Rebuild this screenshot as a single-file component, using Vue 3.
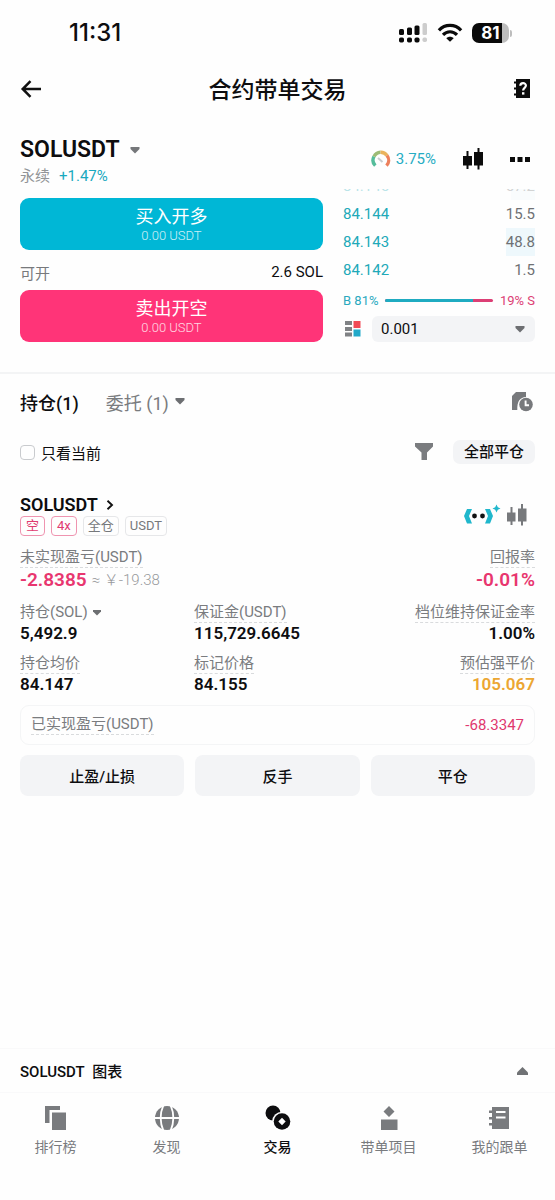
<script setup>
import { ref } from 'vue'

const onlyCurrent = ref(false)
const step = ref('0.001')

const bids = [
  { price: '84.144', size: '15.5', depth: 0 },
  { price: '84.143', size: '48.8', depth: 16 },
  { price: '84.142', size: '1.5', depth: 0 },
]

const stats = [
  { label: '持仓(SOL)', value: '5,492.9', caret: true },
  { label: '保证金(USDT)', value: '115,729.6645' },
  { label: '档位维持保证金率', value: '1.00%' },
  { label: '持仓均价', value: '84.147' },
  { label: '标记价格', value: '84.155' },
  { label: '预估强平价', value: '105.067', tone: 'warn' },
]

const actions = ['止盈/止损', '反手', '平仓']

const tabs = [
  { id: 'rank', label: '排行榜' },
  { id: 'discover', label: '发现' },
  { id: 'trade', label: '交易', active: true },
  { id: 'projects', label: '带单项目' },
  { id: 'mine', label: '我的跟单' },
]
</script>

<template>
  <div class="app">
    <div class="status">
      <span class="time">11:31</span>
      <div class="status-icons">
        <svg class="signal" width="30" height="20" viewBox="0 0 30 20">
          <g fill="#0a0a0a">
            <rect x="1" y="6" width="5" height="6" rx="1.5" />
            <rect x="9" y="4.500" width="5" height="7.500" rx="1.500" />
            <rect x="16.500" y="2.500" width="5" height="9.500" rx="1.500" />
            <rect x="1" y="14.500" width="5" height="5" rx="1.700" />
            <rect x="9" y="14.500" width="5" height="5" rx="1.700" />
            <rect x="16.500" y="14.500" width="5" height="5" rx="1.700" />
          </g>
          <rect x="24.500" y="0" width="4.500" height="12" rx="1.500" fill="#cdcdcd" />
          <rect x="24.500" y="14.500" width="4.500" height="4.500" rx="1.700" fill="#cdcdcd" />
        </svg>
        <svg width="26" height="20" viewBox="0 0 26 20" fill="none" stroke="#0a0a0a" stroke-width="3.200">
          <path d="M1.900 7.400C8 .8 18 .8 24.100 7.400" />
          <path d="M6 11.800C10 7.700 16 7.700 20 11.800" />
          <path d="M13 18.800L9.300 15.200C11.300 13.200 14.700 13.200 16.700 15.200Z" fill="#0a0a0a" stroke="none" />
        </svg>
        <div class="battery"><span>81</span><i></i></div>
      </div>
    </div>

    <header class="nav">
      <button class="icon-btn" aria-label="返回">
        <svg width="22" height="18" viewBox="0 0 22 18" fill="none" stroke="#111" stroke-width="2.500">
          <path d="M21 9H2.500M10.500 1.200L2.700 9L10.500 16.800" />
        </svg>
      </button>
      <h1>合约带单交易</h1>
      <button class="icon-btn" aria-label="帮助">
        <svg width="18" height="20" viewBox="0 0 18 20">
          <path d="M3 0H17V19H3V16.500H1V14.500H3V10.500H1V8.500H3V4.500H1V2.500H3Z" fill="#0c0c0c" />
          <path d="M7.300 6.800C7.300 3.300 12.900 3.300 12.900 6.600C12.900 8.800 10.100 8.900 10.100 11.500" fill="none" stroke="#fff" stroke-width="2.200" />
          <rect x="9" y="13.200" width="2.400" height="2.400" fill="#fff" />
        </svg>
      </button>
    </header>

    <section class="symbol">
      <div>
        <button class="pair">SOLUSDT<svg width="10" height="7" viewBox="0 0 10 7"><path d="M.5 0H9.500V2L5 6.500L.5 2Z" fill="#75777a" /></svg></button>
        <p class="sub"><span>永续</span><b>+1.47%</b></p>
      </div>
      <div class="tools">
        <svg width="20" height="18" viewBox="0 0 20 18" fill="none" stroke-width="3.400">
          <path d="M4.300 15.600A7.700 7.700 0 0 1 3 6.500" stroke="#55bd9b" />
          <path d="M3 6.500A7.700 7.700 0 0 1 9.500 2.300" stroke="#9dbb76" />
          <path d="M9.500 2.300A7.700 7.700 0 0 1 16 5.500" stroke="#eab35d" />
          <path d="M16 5.500A7.700 7.700 0 0 1 15.500 15.600" stroke="#ed805c" />
          <path d="M7 8L11.500 12" stroke="#c8cccf" stroke-width="2" />
        </svg>
        <span class="rate">3.75%</span>
        <button class="icon-btn candles" aria-label="K线">
          <svg width="20" height="22" viewBox="0 0 20 22" fill="#0c0c0c">
            <path d="M3.500 3H5.500V8H9V17.500H5.500V21H3.500V17.500H0V8H3.500ZM14.500 0H16.500V4H20V17.500H16.500V21.500H14.500V17.500H11V4H14.500Z" />
          </svg>
        </button>
        <button class="icon-btn" aria-label="更多">
          <svg width="20" height="5" viewBox="0 0 20 5" fill="#0c0c0c"><path d="M0 0H5V5H0ZM7.500 0H12.500V5H7.500ZM15 0H20V5H15Z" /></svg>
        </button>
      </div>
    </section>

    <section class="trade">
      <div class="order">
        <button class="side buy"><span>买入开多</span><small>0.00 USDT</small></button>
        <div class="avail"><span>可开</span><b>2.6 SOL</b></div>
        <button class="side sell"><span>卖出开空</span><small>0.00 USDT</small></button>
      </div>
      <div class="book">
        <div class="peek"><div class="level"><span class="price">84.145</span><span class="size" style="--depth: 24px">57.2</span></div></div>
        <div v-for="b in bids" :key="b.price" class="level">
          <span class="price">{{ b.price }}</span>
          <span class="size" :style="{ '--depth': b.depth * 2 + 'px' }">{{ b.size }}</span>
        </div>
        <div class="ratio"><span class="b">B 81%</span><div class="bar"><i></i></div><span class="s">19% S</span></div>
        <div class="precision">
          <button class="icon-btn" aria-label="盘口布局">
            <svg width="16" height="16" viewBox="0 0 16 16">
              <path d="M0 0H7V4H0ZM0 6H7V10H0ZM0 11.500H7V15.500H0Z" fill="#808285" />
              <rect x="8.500" y="0" width="7" height="7" fill="#f14b56" /><rect x="8.500" y="8.500" width="7" height="7" fill="#22a9c9" />
            </svg>
          </button>
          <label class="step">
            <select v-model="step" aria-label="价格精度"><option>0.001</option></select>
            <svg width="10" height="7" viewBox="0 0 10 7"><path d="M.5 0H9.500V2L5 6.500L.5 2Z" fill="#6d6f72" /></svg>
          </label>
        </div>
      </div>
    </section>

    <section class="holdings">
      <div class="tabs">
        <button class="tab on">持仓(1)</button>
        <button class="tab">委托 (1)<svg width="10" height="7" viewBox="0 0 10 7"><path d="M.5 0H9.500V2L5 6.500L.5 2Z" fill="#6d6f72" /></svg></button>
        <button class="icon-btn end" aria-label="历史">
          <svg width="24" height="21" viewBox="0 0 24 21">
            <path d="M5 1H15V6C9 6.500 6 10 6.300 19H1V5Z" fill="#77797c" />
            <circle cx="15" cy="13.500" r="6.800" fill="#77797c" />
            <path d="M14.600 9.500V14.200H18" fill="none" stroke="#fff" stroke-width="1.900" />
          </svg>
        </button>
      </div>
      <div class="filter">
        <label><input v-model="onlyCurrent" type="checkbox" />只看当前</label>
        <button class="icon-btn end" aria-label="筛选">
          <svg width="18" height="18" viewBox="0 0 18 18"><path d="M0 0H18V3.500L12 9.500V17H6.500V9.500L0 3.500Z" fill="#7a7c7f" /></svg>
        </button>
        <button class="close-all">全部平仓</button>
      </div>
    </section>

    <section class="position">
      <div class="pos-head">
        <div>
          <a href="#" class="name">SOLUSDT<svg width="8" height="10" viewBox="0 0 8 10"><path d="M1.500 .8L6 5L1.500 9.200" fill="none" stroke="#111" stroke-width="1.900" /></svg></a>
          <div class="tags"><span class="red">空</span><span class="red">4x</span><span>全仓</span><span>USDT</span></div>
        </div>
        <div class="pos-icons">
          <button class="icon-btn" aria-label="助手">
            <svg width="38" height="22" viewBox="0 0 38 22">
              <path d="M4 5H9L6 12L9 19.500H4L1 12Z M22 5H27L30 12L27 19.500H22L25 12Z" fill="#20b7cc" />
              <circle cx="11.500" cy="12" r="2.400" fill="#111" /><circle cx="19.500" cy="12" r="2.400" fill="#111" />
              <path d="M33.500 .5L34.800 3.200L37.500 4.500L34.800 5.800L33.500 8.500L32.200 5.800L29.500 4.500L32.200 3.200Z" fill="#20b7cc" />
            </svg>
          </button>
          <button class="icon-btn" aria-label="K线">
            <svg width="20" height="22" viewBox="0 0 20 22" fill="#77797c">
              <path d="M3.500 3H5.500V8.500H8.500V17.500H5.500V21H3.500V17.500H0V8.500H3.500ZM14 0H16V4.500H19.500V17.500H16V21.500H14V17.500H11V4.500H14Z" />
            </svg>
          </button>
        </div>
      </div>

      <div class="pnl">
        <div>
          <span class="label">未实现盈亏(USDT)</span>
          <p><b>-2.8385</b><small>≈ ￥-19.38</small></p>
        </div>
        <div class="right">
          <span class="label">回报率</span>
          <p><b>-0.01%</b></p>
        </div>
      </div>

      <dl class="stats">
        <div v-for="s in stats" :key="s.label">
          <dt><span class="label" :class="{ plain: s.caret }">{{ s.label }}</span><svg v-if="s.caret" width="8" height="6" viewBox="0 0 8 6"><path d="M0 0H8V1.500L4 5.500L0 1.500Z" fill="#6d6f72" /></svg></dt>
          <dd :class="s.tone">{{ s.value }}</dd>
        </div>
      </dl>

      <div class="realised"><span class="label">已实现盈亏(USDT)</span><b>-68.3347</b></div>
      <div class="actions"><button v-for="a in actions" :key="a">{{ a }}</button></div>
    </section>

    <footer>
      <button class="chart"><span>SOLUSDT&nbsp; 图表</span><svg width="11" height="8" viewBox="0 0 11 8"><path d="M5.500 0L11 5.500V8H0V5.500Z" fill="#707275" /></svg></button>
      <nav class="tabbar">
        <a v-for="t in tabs" :key="t.id" href="#" :class="{ active: t.active }">
          <svg width="26" height="26" viewBox="0 0 26 26" fill="currentColor">
            <path v-if="t.id === 'rank'" d="M2 1H17V5H6.500V18H2ZM9 7.500H23V25H9Z" />
            <template v-else-if="t.id === 'discover'">
              <circle cx="13" cy="13" r="12" />
              <path d="M0 13H26M9.500 0C6 8 6 18 9.500 26M16.500 0C20 8 20 18 16.500 26" fill="none" stroke="#fff" stroke-width="1.800" />
            </template>
            <template v-else-if="t.id === 'trade'">
              <circle cx="8" cy="8" r="7.500" />
              <circle cx="17" cy="16.500" r="9.800" fill="#fff" />
              <circle cx="17" cy="16.500" r="8.300" />
              <path d="M17 12.800L20.700 16.500L17 20.200L13.300 16.500Z" fill="#fff" />
            </template>
            <path v-else-if="t.id === 'projects'" d="M13 1L18.500 6.500L13 12L7.500 6.500ZM5 14.500H21.500V25H5Z" />
            <template v-else>
              <path d="M5 2H22V24H5V20.500H2V18H5V14.500H2V12H5V8H2V5.500H5Z" />
              <path d="M9 6H18.500V8H9ZM9 11.500H18.500V13.500H9Z" fill="#fff" />
            </template>
          </svg>
          <span>{{ t.label }}</span>
        </a>
      </nav>
    </footer>
  </div>
</template>

<style>
body {
  background: #fff;
}
</style>

<style scoped>
* {
  box-sizing: border-box;
  margin: 0;
}
.app {
  display: flex;
  flex-direction: column;
  min-height: 100vh;
  background: #fefefe;
  color: #0d0d0f;
  font-family: Roboto, "Noto Sans CJK SC", sans-serif;
  font-size: 15px;
}
button,
select {
  padding: 0;
  border: 0;
  background: none;
  color: inherit;
  font: inherit;
  cursor: pointer;
}
a {
  color: inherit;
  text-decoration: none;
}
svg {
  display: block;
  flex: none;
}
p {
  display: flex;
}
.icon-btn {
  display: flex;
  align-items: center;
}
.end {
  margin-left: auto;
}

.status {
  display: flex;
  align-items: center;
  justify-content: space-between;
  height: 66px;
  padding: 0 43px 0 69px;
}
.time {
  font: 500 24px/28px Inter, sans-serif;
}
.status-icons {
  display: flex;
  align-items: center;
  gap: 9px;
}
.battery {
  display: flex;
  align-items: center;
  gap: 1px;
}
.battery span {
  width: 37px;
  height: 20px;
  border-radius: 7px;
  background: linear-gradient(90deg, #0a0a0a 82%, #bdbdbd 82%);
  color: #fff;
  font: 700 17px/20px Inter, sans-serif;
  text-align: center;
}
.battery i {
  width: 2px;
  height: 7px;
  border-radius: 0 2px 2px 0;
  background: #bdbdbd;
}

.nav {
  display: flex;
  align-items: center;
  justify-content: space-between;
  height: 46px;
  padding: 0 24px 0 20px;
}
.nav h1 {
  padding-top: 3px;
  font-size: 23px;
  font-weight: 500;
  line-height: 32px;
}

.symbol {
  display: flex;
  justify-content: space-between;
  height: 76px;
  padding: 22px 25px 0 20px;
}
.pair {
  display: flex;
  align-items: center;
  gap: 10px;
  padding-top: 1px;
  font-size: 23px;
  font-weight: 600;
  line-height: 30px;
}
.sub {
  gap: 9px;
  color: #929497;
  line-height: 22px;
}
.sub b {
  color: #18a9bf;
  font-weight: 400;
}
.tools {
  display: flex;
  align-items: center;
  height: 50px;
}
.rate {
  margin: 0 27px 0 5px;
  color: #26acc3;
}
.candles {
  margin-right: 27px;
}

.trade {
  display: grid;
  grid-template-columns: 303fr 192fr;
  gap: 20px;
  padding: 0 20px 30px;
  border-bottom: 2px solid #f3f4f5;
}
.order {
  padding-top: 10px;
}
.side {
  display: flex;
  flex-direction: column;
  align-items: center;
  width: 100%;
  height: 52px;
  padding-top: 6px;
  border-radius: 9px;
  color: #fff;
  font-size: 18px;
  line-height: 25px;
}
.side small {
  font-size: 13px;
  font-weight: 300;
  line-height: 13px;
  opacity: 0.8;
}
.buy {
  background: #00b7d6;
}
.sell {
  background: #ff3478;
}
.avail {
  display: flex;
  align-items: center;
  justify-content: space-between;
  height: 40px;
  padding-top: 4px;
}
.avail span {
  color: #77797c;
}
.avail b {
  font-weight: 400;
}
.peek {
  display: flex;
  flex-direction: column;
  justify-content: flex-end;
  height: 11px;
  margin-top: 1px;
  overflow: hidden;
  opacity: 0.3;
}
.peek .level {
  flex: none;
}
.level {
  display: flex;
  align-items: center;
  justify-content: space-between;
  height: 28px;
}
.price {
  color: #21a9b8;
}
.size {
  color: #6f7174;
  line-height: 28px;
  background: linear-gradient(#eef8fc, #eef8fc) right / var(--depth) 100% no-repeat;
}
.ratio {
  display: flex;
  align-items: center;
  gap: 7px;
  height: 32px;
  font-size: 13px;
}
.b {
  color: #2aa9be;
}
.s {
  color: #dc3f75;
}
.bar {
  flex: 1;
  height: 3px;
  border-radius: 2px;
  background: #dc3f75;
  overflow: hidden;
}
.bar i {
  display: block;
  width: 81%;
  height: 100%;
  background: #1fabc1;
}
.precision {
  display: flex;
  align-items: center;
  gap: 11px;
  padding-left: 2px;
}
.step {
  display: flex;
  flex: 1;
  align-items: center;
  height: 26px;
  padding: 0 10px 0 9px;
  border-radius: 6px;
  background: #f3f4f6;
}
.step select {
  flex: 1;
  min-width: 0;
  appearance: none;
}

.holdings {
  padding: 0 20px;
}
.tabs,
.filter {
  display: flex;
  align-items: center;
}
.tabs {
  gap: 27px;
  height: 55px;
  font-size: 18px;
}
.tab {
  display: flex;
  align-items: center;
  gap: 6px;
  color: #7a7c7f;
}
.tab.on {
  color: #0d0d0f;
  font-weight: 500;
}
.filter {
  gap: 20px;
  height: 46px;
}
.filter label {
  display: flex;
  align-items: center;
  gap: 6px;
}
.filter input {
  width: 15px;
  height: 15px;
  appearance: none;
  border: 1px solid #c9cbce;
  border-radius: 4px;
}
.filter input:checked {
  background: #00b7d6;
}
.close-all {
  height: 24px;
  padding: 0 11px;
  border-radius: 7px;
  background: #f3f4f6;
  font-weight: 500;
  line-height: 24px;
}

.position {
  padding: 19px 20px 0;
}
.pos-head {
  display: flex;
  justify-content: space-between;
}
.name {
  display: flex;
  align-items: center;
  gap: 8px;
  font-size: 18px;
  font-weight: 600;
  line-height: 22px;
}
.tags {
  display: flex;
  gap: 6px;
}
.tags span {
  height: 20px;
  padding: 0 4px;
  border: 1px solid #e6e7e9;
  border-radius: 4px;
  color: #76787b;
  font-size: 13px;
  line-height: 18px;
}
.tags .red {
  padding: 0 5px;
  border-color: #ef94b0;
  color: #e03a70;
}
.pos-icons {
  display: flex;
  align-items: center;
  gap: 6px;
  padding-right: 8px;
}
.label {
  display: inline-block;
  border-bottom: 1px dashed #d9dbdd;
  color: #7a7c7f;
  line-height: 19px;
}
.plain {
  border-color: transparent;
}
.pnl {
  display: flex;
  justify-content: space-between;
  padding-top: 12px;
}
.pnl p {
  align-items: center;
  gap: 5px;
  line-height: 24px;
}
.pnl b {
  color: #e8366f;
  font-size: 19px;
  font-weight: 600;
}
.pnl small {
  color: #97999c;
  font-size: 15px;
  font-weight: 300;
}
.right {
  text-align: right;
}
.stats {
  display: grid;
  grid-template-columns: 174fr 170fr 171fr;
  row-gap: 11px;
  padding-top: 11px;
}
.stats > div:nth-child(3n) {
  text-align: right;
}
.stats dt {
  display: flex;
  align-items: center;
  gap: 5px;
}
.stats > div:nth-child(3n) dt {
  justify-content: flex-end;
}
.stats dd {
  font-size: 17px;
  font-weight: 600;
  line-height: 20px;
}
.stats .warn {
  color: #eca632;
}
.realised {
  display: flex;
  align-items: center;
  justify-content: space-between;
  height: 40px;
  margin-top: 11px;
  padding: 0 10px;
  border: 1px solid #f4f5f6;
  border-radius: 9px;
}
.realised b {
  color: #e0386f;
  font-weight: 400;
}
.actions {
  display: grid;
  grid-template-columns: repeat(3, 1fr);
  gap: 11px;
  padding-top: 10px;
}
.actions button {
  height: 41px;
  border-radius: 8px;
  background: #f3f4f6;
  font-weight: 500;
}

footer {
  margin-top: auto;
}
.chart {
  display: flex;
  align-items: center;
  justify-content: space-between;
  width: 100%;
  height: 45px;
  padding: 0 27px 0 20px;
  border-top: 1px solid #f9f9fa;
  border-bottom: 1px solid #f9f9fa;
  font-weight: 500;
}
.tabbar {
  display: grid;
  grid-template-columns: repeat(5, 1fr);
  padding: 12px 0 43px;
}
.tabbar a {
  display: flex;
  flex-direction: column;
  align-items: center;
  gap: 6px;
  color: #797b7e;
  font-size: 14px;
  line-height: 20px;
}
.tabbar .active {
  color: #0d0d0f;
  font-weight: 500;
}
</style>
